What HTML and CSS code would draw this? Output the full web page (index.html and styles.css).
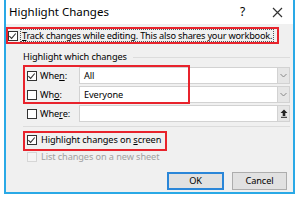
FILE: index.html
```html
<!DOCTYPE html>
<html lang="en">
<head>
<meta charset="UTF-8">
<title>Highlight Changes</title>
<link rel="stylesheet" href="styles.css">
</head>
<body>
<div class="dlg">
	<div class="titlebar">
		<span class="title">Highlight Changes</span>
		<span class="help">?</span>
		<svg class="close" width="11" height="11" viewBox="0 0 11 11"><path d="M1 1L10 10M10 1L1 10" stroke="#333" stroke-width="1.2" fill="none"/></svg>
	</div>
	<div class="content">
		<div class="row track">
			<span class="chk on"><svg width="10" height="10" viewBox="0 0 10 10"><path d="M1.5 5.2L4 7.6L8.6 2.2" stroke="#333" stroke-width="1.2" fill="none"/></svg></span>
			<span class="focus"><u>T</u>rack changes while editing. This also shares your workbook.</span>
		</div>
		<div class="group">
			<div class="legend"><span>Highlight which changes</span><i class="line"></i></div>
			<div class="row field">
				<span class="chk on"><svg width="10" height="10" viewBox="0 0 10 10"><path d="M1.5 5.2L4 7.6L8.6 2.2" stroke="#333" stroke-width="1.2" fill="none"/></svg></span>
				<span class="lbl">Whe<u>n</u>:</span>
				<div class="combo"><span class="val">All</span><span class="drop"><svg width="7" height="5" viewBox="0 0 7 5"><path d="M0.5 1L3.5 4L6.5 1" stroke="#888" fill="none"/></svg></span></div>
			</div>
			<div class="row field">
				<span class="chk"></span>
				<span class="lbl">Wh<u>o</u>:</span>
				<div class="combo"><span class="val">Everyone</span><span class="drop"><svg width="7" height="5" viewBox="0 0 7 5"><path d="M0.5 1L3.5 4L6.5 1" stroke="#888" fill="none"/></svg></span></div>
			</div>
			<div class="row field">
				<span class="chk"></span>
				<span class="lbl">Whe<u>r</u>e:</span>
				<div class="combo"><span class="val"></span><span class="pick"><svg width="8" height="9" viewBox="0 0 8 9"><path d="M4 0.5L7.5 4H5.3V7H2.7V4H0.5Z" fill="#222"/><path d="M1 8.3H7" stroke="#222"/></svg></span></div>
			</div>
		</div>
		<div class="row screen">
			<span class="chk on"><svg width="10" height="10" viewBox="0 0 10 10"><path d="M1.5 5.2L4 7.6L8.6 2.2" stroke="#333" stroke-width="1.2" fill="none"/></svg></span>
			<span>Highlight changes on <u>s</u>creen</span>
		</div>
		<div class="row list">
			<span class="chk off"></span>
			<span>List changes on a new sheet</span>
		</div>
		<div class="buttons">
			<span class="btn def">OK</span>
			<span class="btn">Cancel</span>
		</div>
	</div>
	<i class="mark m1"></i>
	<i class="mark m2"></i>
	<i class="mark m3"></i>
</div>
</body>
</html>
```
FILE: styles.css
```css
* {
	box-sizing: border-box;
}
BODY {
	margin: 0;
	background: #fff;
	font-family: "Noto Sans", "Open Sans", sans-serif;
	font-size: 9.2px;
	line-height: 14px;
	letter-spacing: -0.1px;
	color: #000;
	white-space: nowrap;
}

.dlg {
	position: relative;
	margin-left: 4px;
	width: 291px;
	border: 2px solid #2aa9e6;
	border-top: none;
}
.titlebar {
	display: flex;
	align-items: center;
	height: 24px;
	background: #fff;
	padding-left: 3px;
}
.title {
	flex: 1;
	font-size: 11.5px;
	letter-spacing: 0;
}
.help {
	font-size: 12px;
	margin-right: 27px;
}
.close {
	margin-right: 10px;
}

.content {
	background: #f0f0f0;
	height: 168px;
	padding: 5px 0 0 0;
}
.row {
	display: flex;
	align-items: center;
}
.chk {
	display: inline-flex;
	width: 10px;
	height: 10px;
	border: 1px solid #333;
	background: #fff;
	flex: none;
}
.chk svg {
	margin: -1px 0 0 -1px;
}
.chk.off {
	border-color: #d6d6d6;
	background: #f4f4f4;
}

.track {
	height: 13px;
	padding-left: 2px;
}
.focus {
	margin-left: 2px;
	border: 1px dotted #555;
	padding: 0 1px;
	line-height: 11px;
	letter-spacing: -0.2px;
}

.group {
	margin: 8px 3px 0 17px;
	border-bottom: 1px solid #dcdcdc;
	padding-bottom: 3px;
}
.legend {
	display: flex;
	align-items: center;
	height: 14px;
}
.legend span {
	margin-right: 6px;
}
.legend .line {
	flex: 1;
	height: 1px;
	background: #dcdcdc;
}
.field {
	height: 19px;
	padding-left: 4px;
}
.legend + .field {
	margin-top: 2px;
}
.lbl {
	width: 39px;
	margin-left: 3px;
}
.combo {
	flex: 1;
	display: flex;
	height: 17px;
	background: #fff;
	border: 1px solid #d2d2d2;
}
.val {
	flex: 1;
	padding-left: 4px;
	line-height: 15px;
}
.drop, .pick {
	width: 12px;
	display: flex;
	align-items: center;
	justify-content: center;
	background: #e6e6e6;
	border-left: 1px solid #d2d2d2;
}
.screen {
	margin: 6px 0 0 21px;
	height: 14px;
}
.screen span + span, .list span + span {
	margin-left: 4px;
}
.list {
	margin: 3px 0 0 21px;
	height: 14px;
	color: #a0a0a0;
}
.buttons {
	display: flex;
	justify-content: flex-end;
	gap: 8px;
	margin: 8px 6px 0 0;
}
.btn {
	width: 55px;
	height: 18px;
	display: flex;
	align-items: center;
	justify-content: center;
	background: #e1e1e1;
	border: 1px solid #adadad;
}
.btn.def {
	width: 57px;
	border: 2px solid #2a86d8;
}

.mark {
	position: absolute;
	border: 2px solid #e8232c;
}
.m1 { left: 0; top: 27px; width: 273px; height: 17px; }
.m2 { left: 17px; top: 65px; width: 167px; height: 39px; }
.m3 { left: 17px; top: 131px; width: 144px; height: 20px; }
```
